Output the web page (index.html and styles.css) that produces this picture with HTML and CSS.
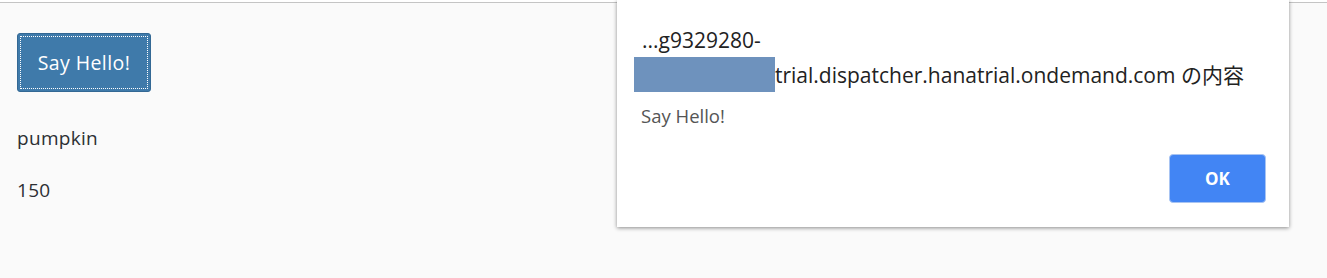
FILE: index.html
```html
<!DOCTYPE html>
<html>
<head>
<meta charset="utf-8">
<link rel="stylesheet" href="styles.css">
</head>
<body>
<div class="topline"></div>
<main class="page">
  <button class="hello"><span class="focus">Say Hello!</span></button>
  <p class="txt t1">pumpkin</p>
  <p class="txt t2">150</p>
</main>
<div class="dialog">
  <div class="title">
    <div class="tl first">...g9329280-</div>
    <div class="tl"><span class="blur"></span>trial.dispatcher.hanatrial.ondemand.com の内容</div>
  </div>
  <div class="msg">Say Hello!</div>
  <div class="actions"><button class="ok">OK</button></div>
</div>
</body>
</html>
```
FILE: styles.css
```css
html, body { margin: 0; padding: 0; }
body {
  width: 1327px; height: 278px; overflow: hidden;
  background: #fafafa;
  position: relative;
  font-family: "Open Sans", "Noto Sans", sans-serif;
}
.topline { height: 2px; border-bottom: 1px solid #c4c4c4; background: #fff; }
.page { padding: 30px 0 0 17px; }
.hello {
  display: block;
  width: 134px; height: 59px;
  margin: 0; padding: 2px;
  background: #3f7aaa;
  border: 1px solid #336894;
  border-radius: 3px;
  color: #fff;
  font-family: "Open Sans", sans-serif;
  font-size: 19.5px;
  letter-spacing: 0.4px;
}
.focus {
  display: flex; align-items: center; justify-content: center;
  height: 100%;
  border: 1px dotted #fff;
  box-sizing: border-box;
}
.txt { margin: 0; font-size: 19px; color: #2c2f33; line-height: 24px; letter-spacing: 0.3px; }
.t1 { margin-top: 34px; }
.t2 { margin-top: 28px; }
.dialog {
  position: absolute; left: 617px; top: 0;
  width: 672px; height: 227px;
  background: #fff;
  box-sizing: border-box;
  box-shadow: 0 1px 4px rgba(0,0,0,0.45);
  padding: 23px 0 0 17px;
  font-family: "Open Sans", "Noto Sans CJK JP", sans-serif;
}
.title { font-size: 21px; color: #222; line-height: 34px; }
.tl { display: flex; align-items: center; }
.first { padding-left: 8px; }
.blur { display: inline-block; width: 141px; height: 35px; background: #6e92bd; }
.msg { font-size: 18.5px; color: #555; padding-left: 7px; margin-top: 12px; line-height: 24px; }
.actions { display: flex; justify-content: flex-end; padding-right: 23px; margin-top: 26px; }
.ok {
  width: 97px; height: 49px;
  background: #4285f4;
  border: 1px solid #a8c4f2;
  border-radius: 4px;
  color: #fff;
  font-family: "Open Sans", sans-serif;
  font-weight: 700;
  font-size: 17px;
}
```
